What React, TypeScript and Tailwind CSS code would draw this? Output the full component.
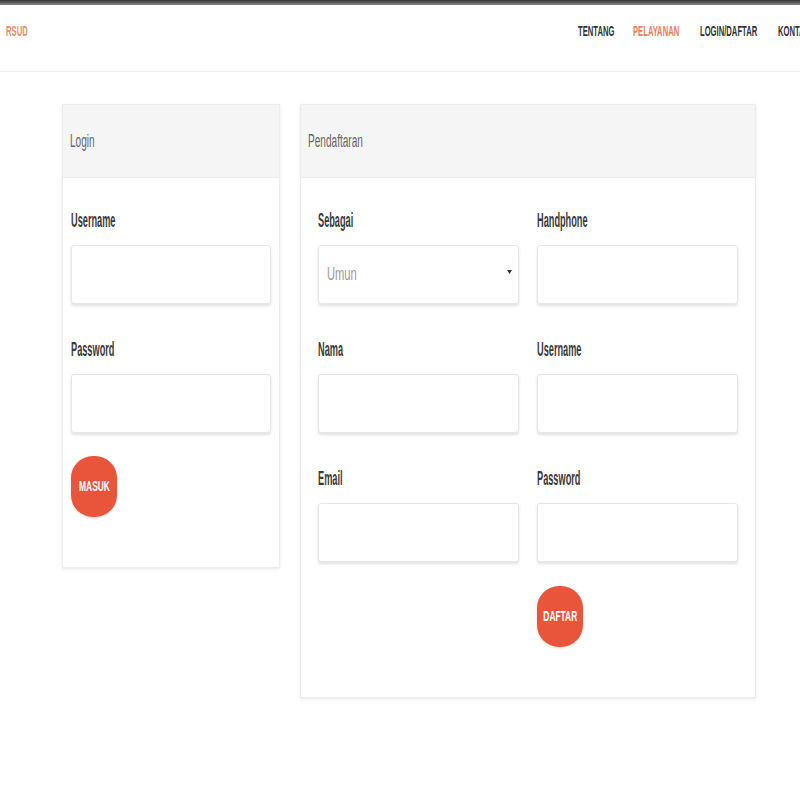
import React from 'react'

const Sq = ({ className, children }: { className: string; children: React.ReactNode }) => (
    <span className={`inline-block whitespace-nowrap ${className}`}>{children}</span>
)

const Field = ({ label, select }: { label: string; select?: boolean }) => (
    <div className="flex flex-col">
        <div className="h-[24px] leading-[24px] mb-[13px]">
            <Sq className="origin-left scale-x-[0.46] text-[20px] font-bold text-[#3a3a3a]">{label}</Sq>
        </div>
        <div className="h-[59px] rounded-[3px] border border-[#e6e6e6] bg-white shadow-[0_2px_3px_rgba(0,0,0,0.12)] flex items-center justify-between pl-[8px] pr-[6px]">
            {select && (
                <>
                    <Sq className="origin-left scale-x-[0.62] text-[18px] text-[#9a9a9a]">Umun</Sq>
                    <svg width="5" height="6" viewBox="0 0 5 6" className="mb-[6px]">
                        <path d="M0 1h5L2.5 5z" fill="#333" />
                    </svg>
                </>
            )}
        </div>
    </div>
)

const OrangeButton = ({ text }: { text: string }) => (
    <button className="w-[46px] h-[61px] rounded-[22px] bg-[#e8553a] shadow-[0_1px_3px_rgba(0,0,0,0.15)] flex items-center justify-center overflow-visible">
        <Sq className="origin-center scale-x-[0.56] text-[15px] font-bold text-white">{text}</Sq>
    </button>
)

const CardHeader = ({ title }: { title: string }) => (
    <div className="h-[73px] bg-[#f5f5f5] border-b border-[#ececec] flex items-center px-[7px]">
        <Sq className="origin-left scale-x-[0.56] text-[18px] text-[#666]">{title}</Sq>
    </div>
)

export default function App() {
    return (
        <div className="w-[800px] h-[800px] overflow-hidden bg-white font-['Liberation_Sans',Arial,sans-serif]">
            <div className="h-[5px] bg-gradient-to-b from-[#333] to-[#8a8a8a]" />
            <nav className="h-[67px] border-b border-[#f1f1f1] flex justify-between pt-[16px] pl-[6px]">
                <div className="w-[24px] h-[20px] leading-[20px]">
                    <Sq className="origin-left scale-x-[0.51] text-[15px] font-bold text-[#ef8a6c]">RSUD</Sq>
                </div>
                <ul className="flex gap-[18px] h-[20px] leading-[20px] w-[222px] overflow-hidden">
                    <li className="w-[37px] shrink-0">
                        <Sq className="origin-left scale-x-[0.51] text-[15px] font-bold text-[#333]">TENTANG</Sq>
                    </li>
                    <li className="w-[49px] shrink-0">
                        <Sq className="origin-left scale-x-[0.51] text-[15px] font-bold text-[#ef7a5c]">PELAYANAN</Sq>
                    </li>
                    <li className="w-[60px] shrink-0">
                        <Sq className="origin-left scale-x-[0.51] text-[15px] font-bold text-[#333]">LOGIN/DAFTAR</Sq>
                    </li>
                    <li className="w-[40px] shrink-0">
                        <Sq className="origin-left scale-x-[0.51] text-[15px] font-bold text-[#333]">KONTAK</Sq>
                    </li>
                </ul>
            </nav>

            <main className="flex items-start gap-[20px] pl-[62px] pt-[32px]">
                <section className="w-[218px] border border-[#ececec] bg-white shadow-[0_1px_3px_rgba(0,0,0,0.1)]">
                    <CardHeader title="Login" />
                    <div className="px-[8px] pt-[30px] pb-[50px] flex flex-col">
                        <div className="flex flex-col gap-[33px]">
                            <Field label="Username" />
                            <Field label="Password" />
                        </div>
                        <div className="mt-[23px]">
                            <OrangeButton text="MASUK" />
                        </div>
                    </div>
                </section>

                <section className="w-[456px] border border-[#ececec] bg-white shadow-[0_1px_3px_rgba(0,0,0,0.1)]">
                    <CardHeader title="Pendaftaran" />
                    <div className="px-[17px] pt-[30px] pb-[50px]">
                        <div className="grid grid-cols-2 gap-x-[18px] gap-y-[33px]">
                            <Field label="Sebagai" select />
                            <Field label="Handphone" />
                            <Field label="Nama" />
                            <Field label="Username" />
                            <Field label="Email" />
                            <Field label="Password" />
                        </div>
                        <div className="grid grid-cols-2 gap-x-[18px] mt-[24px]">
                            <div />
                            <div>
                                <OrangeButton text="DAFTAR" />
                            </div>
                        </div>
                    </div>
                </section>
            </main>
        </div>
    )
}
